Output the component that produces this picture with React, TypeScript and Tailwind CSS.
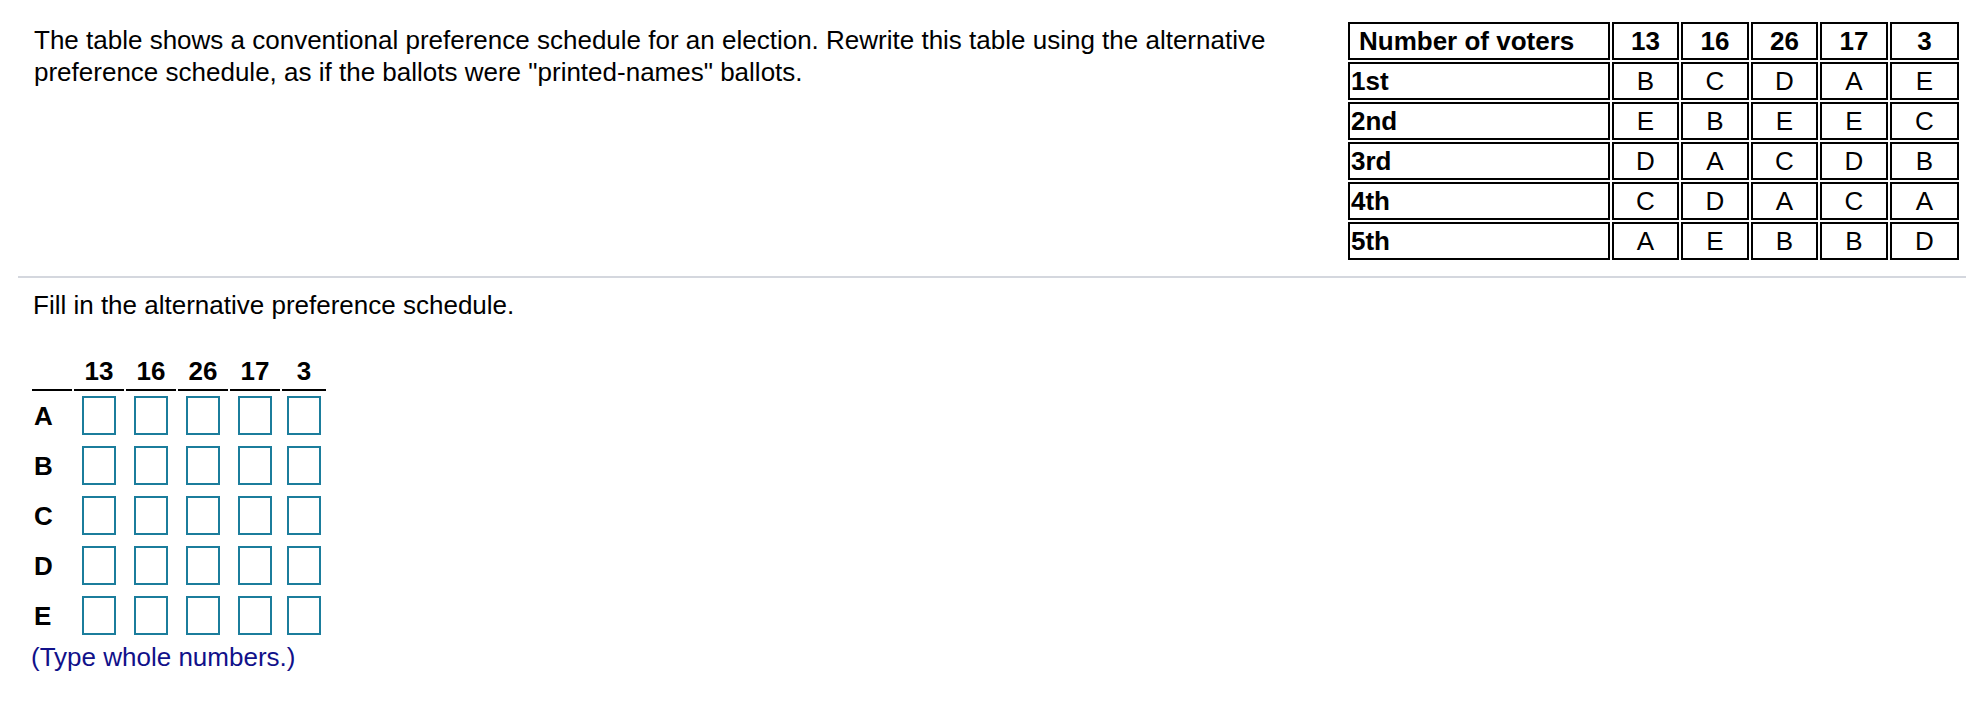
import React from "react";

const counts = ["13", "16", "26", "17", "3"];
const rows: { label: string; cells: string[] }[] = [
  { label: "1st", cells: ["B", "C", "D", "A", "E"] },
  { label: "2nd", cells: ["E", "B", "E", "E", "C"] },
  { label: "3rd", cells: ["D", "A", "C", "D", "B"] },
  { label: "4th", cells: ["C", "D", "A", "C", "A"] },
  { label: "5th", cells: ["A", "E", "B", "B", "D"] },
];
const colW = ["w-[67px]", "w-[68px]", "w-[67px]", "w-[68px]", "w-[69px]"];
const candidates = ["A", "B", "C", "D", "E"];
const ansW = ["w-[50px]", "w-[50px]", "w-[50px]", "w-[50px]", "w-[44px]"];

export default function App() {
  return (
    <div className="w-[1976px] h-[706px] bg-white text-black font-['Liberation_Sans',Arial,sans-serif] overflow-hidden">
      <div className="flex items-start">
        <p className="pl-[34px] pt-[24px] text-[26px] leading-[32px]">
          The table shows a conventional preference schedule for an election. Rewrite this table using the alternative
          <br />
          preference schedule, as if the ballots were "printed-names" ballots.
        </p>
        <table className="ml-auto mr-[15px] mt-[20px] border-separate border-spacing-[2px] text-[26px]">
          <thead>
            <tr>
              <th className="w-[262px] h-[38px] border-2 border-black pl-[9px] text-left font-bold leading-none align-middle">
                Number of voters
              </th>
              {counts.map((c, i) => (
                <th
                  key={c}
                  className={`${colW[i]} h-[38px] border-2 border-black text-center font-bold leading-none align-middle`}
                >
                  {c}
                </th>
              ))}
            </tr>
          </thead>
          <tbody>
            {rows.map((r) => (
              <tr key={r.label}>
                <td className="h-[38px] border-2 border-black pl-[1px] text-left font-bold leading-none align-middle">
                  {r.label}
                </td>
                {r.cells.map((v, i) => (
                  <td
                    key={i}
                    className="h-[38px] border-2 border-black text-center leading-none align-middle"
                  >
                    {v}
                  </td>
                ))}
              </tr>
            ))}
          </tbody>
        </table>
      </div>

      <div className="mt-[14px] ml-[18px] mr-[10px] h-[2px] bg-[#d4d7de]" />

      <p className="mt-[11px] pl-[33px] text-[26px] leading-[32px]">
        Fill in the alternative preference schedule.
      </p>

      <div className="mt-[31px] pl-[32px]">
        <div className="flex gap-[2px]">
          <div className="w-[40px] h-[39px] border-b-2 border-black" />
          {counts.map((c, i) => (
            <div
              key={c}
              className={`${ansW[i]} h-[39px] border-b-2 border-black flex items-center justify-center text-[26px] font-bold leading-none`}
            >
              {c}
            </div>
          ))}
        </div>
        <div className="mt-[5px] flex flex-col gap-[11px]">
          {candidates.map((cand) => (
            <div key={cand} className="flex gap-[2px] h-[39px]">
              <div className="w-[40px] flex items-center pl-[2px] text-[26px] font-bold leading-none">
                {cand}
              </div>
              {counts.map((c, i) => (
                <div key={c} className={`${ansW[i]} flex justify-center`}>
                  <div className="w-[34px] h-[39px] border-2 border-[#1b7d9c] bg-white" />
                </div>
              ))}
            </div>
          ))}
        </div>
      </div>

      <p className="mt-[6px] pl-[31px] text-[26px] leading-[32px] text-[#11118a]">
        (Type whole numbers.)
      </p>
    </div>
  );
}
